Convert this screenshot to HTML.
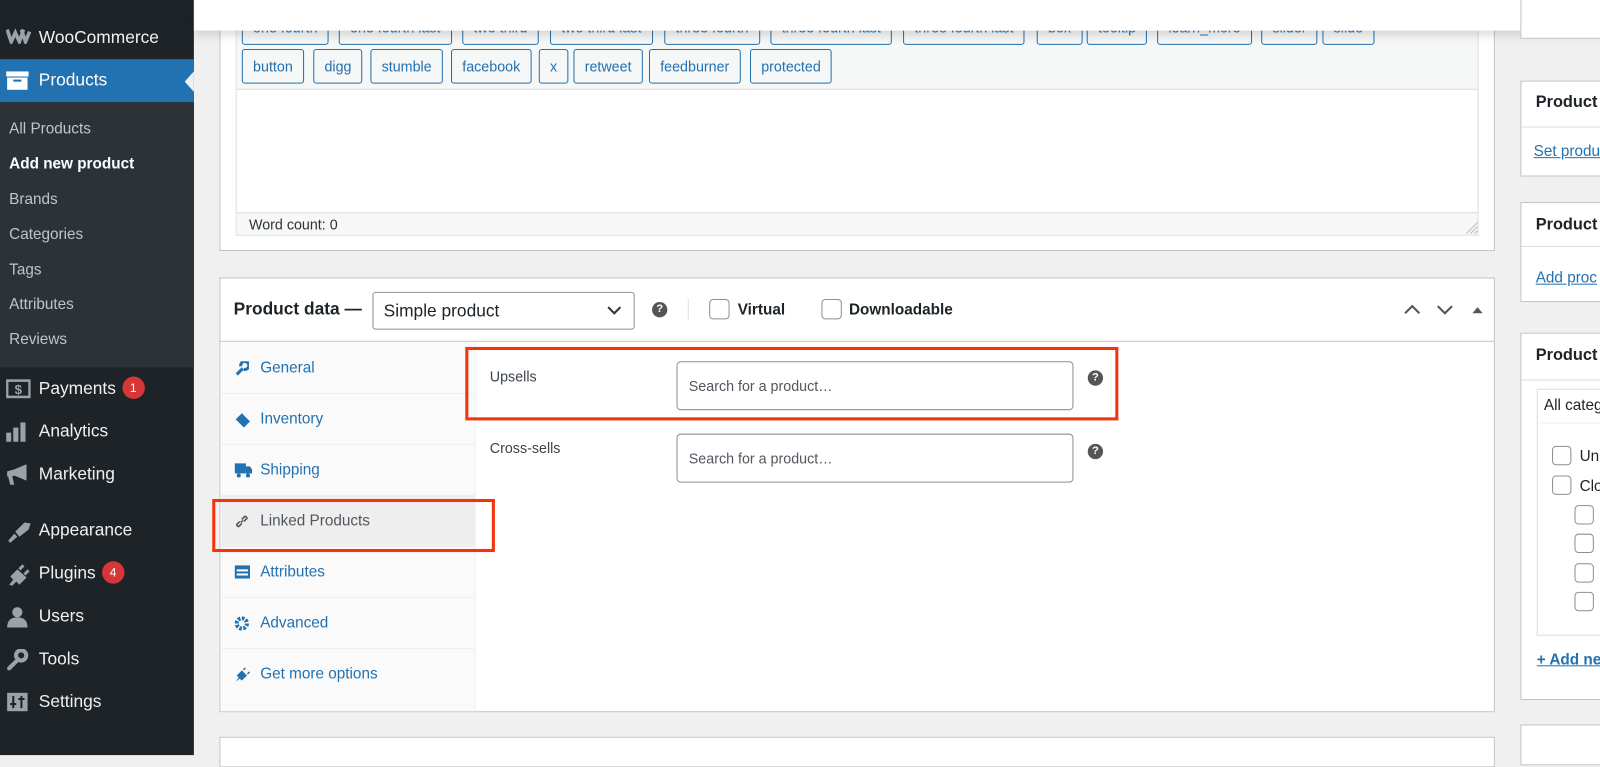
<!DOCTYPE html>
<html><head><meta charset="utf-8"><style>
*{box-sizing:border-box;margin:0;padding:0}
html,body{width:1600px;height:742px;overflow:hidden;background:#f0f0f1}
#wrap{position:absolute;left:0;top:0;width:1568px;height:740px;transform:scale(1.0204);transform-origin:0 0;font-family:"Liberation Sans",sans-serif;font-size:14px;color:#1d2327;white-space:nowrap}
.abs{position:absolute}
#side{left:0;top:0;width:190px;height:740px;background:#1d2327}
.mi{position:absolute;left:0;width:190px;height:42px;color:#f0f0f1;font-size:17px;line-height:42px;padding-left:38px}
.mi svg{position:absolute;left:6px;top:11px}
.sub{position:absolute;left:9px;color:#c3c4c7;font-size:15px}
.badge{display:inline-block;width:22px;height:22px;border-radius:11px;background:#d63638;color:#fff;font-size:12px;line-height:22px;text-align:center;margin-left:6px;vertical-align:2px}
.box{position:absolute;background:#fff;border:1px solid #c3c4c7}
.tb{position:absolute;height:34px;border:1px solid #2271b1;border-radius:3px;color:#2271b1;font-size:14px;line-height:32px;padding:0 10px;background:#f6f7f7}
.tab{position:absolute;left:1px;width:249px;height:50px;border-bottom:1px solid #eee;color:#2271b1;font-size:15px;line-height:50px;padding-left:38px}
.tab svg{position:absolute;left:13px;top:18px}
.inp{position:absolute;left:663px;width:389px;height:48px;border:1px solid #8c8f94;border-radius:4px;color:#50575e;font-size:14px;line-height:46px;padding-left:11px;background:#fff}
.q{position:absolute;width:15px;height:15px;border-radius:50%;background:#555;color:#fff;font-size:11px;font-weight:bold;text-align:center;line-height:15px}
.cb{position:absolute;width:19px;height:19px;border:1px solid #8c8f94;border-radius:4px;background:#fff}
.rh{position:absolute;left:1505px;font-weight:bold;font-size:16px}
.lnk{position:absolute;color:#2271b1;text-decoration:underline;font-size:15px}
</style></head><body><div id="wrap">

<div id="side" class="abs">
 <div class="mi" style="top:16px;height:42px;">
  <svg width="26" height="16" viewBox="0 0 26 16"><path d="M1 2 L5 14 L9 5 L13 14 L17 2 M15 2 L19 14 L23 4" stroke="#9ca2a7" stroke-width="3.5" fill="none"/></svg>WooCommerce</div>
 <div style="position:absolute;left:0;top:59px;width:190px;height:301px;background:#2c3338"></div>
 <div class="mi" style="top:58px;background:#2271b1;color:#fff;">
  <svg width="24" height="20" viewBox="0 0 24 20"><rect x="0" y="1" width="22" height="5" fill="#fff"/><rect x="1" y="7" width="20" height="12" fill="#fff"/><rect x="7" y="9" width="8" height="2" fill="#2271b1"/></svg>Products</div>
 <div style="position:absolute;left:181px;top:70px;width:0;height:0;border-top:10px solid transparent;border-bottom:10px solid transparent;border-right:9px solid #f0f0f1"></div>
 <div class="sub" style="top:118px">All Products</div>
 <div class="sub" style="top:152px;color:#fff;font-weight:bold">Add new product</div>
 <div class="sub" style="top:187px">Brands</div>
 <div class="sub" style="top:221px">Categories</div>
 <div class="sub" style="top:256px">Tags</div>
 <div class="sub" style="top:290px">Attributes</div>
 <div class="sub" style="top:324px">Reviews</div>
 <div class="mi" style="top:360px"><svg width="24" height="20"><rect x="1" y="2" width="22" height="16" fill="none" stroke="#9ca2a7" stroke-width="2.5"/><text x="12" y="15" font-size="13" font-weight="bold" fill="#9ca2a7" text-anchor="middle" font-family="Liberation Sans">$</text></svg>Payments<span class="badge">1</span></div>
 <div class="mi" style="top:402px"><svg width="22" height="20"><rect x="0" y="11" width="5" height="9" fill="#9ca2a7"/><rect x="7" y="6" width="5" height="14" fill="#9ca2a7"/><rect x="14" y="1" width="5" height="19" fill="#9ca2a7"/></svg>Analytics</div>
 <div class="mi" style="top:444px"><svg width="24" height="22"><path d="M1 7 L8 5 L20 0 L20 16 L8 11 L6 12 L8 20 L4 20 L2 12 L1 12 Z" fill="#9ca2a7"/></svg>Marketing</div>
 <div class="mi" style="top:499px"><svg width="24" height="22"><path d="M2 20 L8 13 L11 16 L4 22 Z M9 11 L18 2 L24 3 L22 9 L13 16 Z" fill="#9ca2a7"/></svg>Appearance</div>
 <div class="mi" style="top:541px"><svg width="24" height="22"><path d="M3 21 L7 16 L4 13 L11 6 L20 14 L13 21 L10 18 L6 22 Z M12 5 L16 1 L18 3 L14 7 Z M17 10 L21 6 L23 8 L19 12 Z" fill="#9ca2a7"/></svg>Plugins<span class="badge">4</span></div>
 <div class="mi" style="top:583px"><svg width="22" height="22"><circle cx="11" cy="6" r="5" fill="#9ca2a7"/><path d="M1 21 Q1 11 11 11 Q21 11 21 21 Z" fill="#9ca2a7"/></svg>Users</div>
 <div class="mi" style="top:625px"><svg width="22" height="22"><path d="M3 19 L12 10 M13 11 A5 5 0 1 0 10 8" stroke="#9ca2a7" stroke-width="4" fill="none" stroke-linecap="round"/></svg>Tools</div>
 <div class="mi" style="top:667px"><svg width="22" height="20"><rect x="1" y="1" width="20" height="18" fill="#9ca2a7"/><path d="M7 4 V16 M15 4 V16 M4 12 H10 M12 7 H18" stroke="#1d2327" stroke-width="2"/></svg>Settings</div>
</div>

<div class="box" style="left:215px;top:-2px;width:1250px;height:248px"></div>
<div class="abs" style="left:231px;top:0;width:1218px;height:231px;border:1px solid #dcdcde;background:#fff"></div>
<div class="abs" style="left:232px;top:0;width:1216px;height:88px;background:#f6f7f7;border-bottom:1px solid #dcdcde"></div>
<div class="tb" style="left:237px;top:10px">one fourth</div>
<div class="tb" style="left:332px;top:10px">one fourth last</div>
<div class="tb" style="left:453px;top:10px">two third</div>
<div class="tb" style="left:539px;top:10px">two third last</div>
<div class="tb" style="left:651px;top:10px">three fourth</div>
<div class="tb" style="left:755px;top:10px">three fourth last</div>
<div class="tb" style="left:885px;top:10px">three fourth last</div>
<div class="tb" style="left:1016px;top:10px">box</div>
<div class="tb" style="left:1065px;top:10px">tooltip</div>
<div class="tb" style="left:1134px;top:10px">learn_more</div>
<div class="tb" style="left:1236px;top:10px">slider</div>
<div class="tb" style="left:1296px;top:10px">slide</div>
<div class="tb" style="left:237px;top:48px">button</div>
<div class="tb" style="left:307px;top:48px">digg</div>
<div class="tb" style="left:363px;top:48px">stumble</div>
<div class="tb" style="left:442px;top:48px">facebook</div>
<div class="tb" style="left:528px;top:48px">x</div>
<div class="tb" style="left:562px;top:48px">retweet</div>
<div class="tb" style="left:636px;top:48px">feedburner</div>
<div class="tb" style="left:735px;top:48px">protected</div>
<div class="abs" style="left:232px;top:208px;width:1216px;height:22px;background:#f6f7f7;border-top:1px solid #dcdcde;font-size:14px;line-height:22px;padding-left:12px;color:#2c3338">Word count: 0</div>
<svg class="abs" style="left:1436px;top:217px" width="12" height="12"><path d="M12 1 L1 12 M12 5 L5 12 M12 9 L9 12" stroke="#bbb"/></svg>

<div class="abs" style="left:190px;top:0;width:1400px;height:30px;background:#fff;box-shadow:0 4px 10px rgba(0,0,0,.15)"></div>

<div class="box" style="left:215px;top:272px;width:1250px;height:426px">
 <div style="position:absolute;left:0;top:0;width:1248px;height:62px;border-bottom:1px solid #c3c4c7"></div>
 <div style="position:absolute;left:13px;top:20px;font-weight:bold;font-size:17px">Product data —</div>
 <div style="position:absolute;left:149px;top:13px;width:257px;height:37px;border:1px solid #8c8f94;border-radius:3px;font-size:17px;line-height:35px;padding-left:10px">Simple product
  <svg style="position:absolute;right:12px;top:13px" width="14" height="9"><path d="M1 1 L7 7 L13 1" stroke="#333" stroke-width="2" fill="none"/></svg></div>
 <div class="q" style="left:423px;top:23px">?</div>
 <div style="position:absolute;left:458px;top:20px;width:1px;height:20px;background:#dcdcde"></div>
 <div class="cb" style="left:479px;top:20px;width:20px;height:20px"></div>
 <div style="position:absolute;left:507px;top:22px;font-weight:bold;font-size:15px">Virtual</div>
 <div class="cb" style="left:589px;top:20px;width:20px;height:20px"></div>
 <div style="position:absolute;left:616px;top:22px;font-weight:bold;font-size:15px">Downloadable</div>
 <svg style="position:absolute;left:1160px;top:24px" width="90" height="12"><path d="M1 10 L8 3 L15 10" stroke="#50575e" stroke-width="2" fill="none"/><path d="M33 3 L40 10 L47 3" stroke="#50575e" stroke-width="2" fill="none"/><path d="M67 10 L72 4 L77 10 Z" fill="#50575e"/></svg>
 <div style="position:absolute;left:0;top:63px;width:250px;height:361px;background:#fafafa;border-right:1px solid #eee"></div>
 <div class="tab" style="top:63px"><svg width="14" height="14"><path d="M2 13 L8 7 M9 8 A4 4 0 1 0 6 5" stroke="#2271b1" stroke-width="3" fill="none"/></svg>General</div>
 <div class="tab" style="top:113px"><svg width="16" height="16"><path d="M1 7 L7 1 L15 9 L9 15 Z" fill="#2271b1"/></svg>Inventory</div>
 <div class="tab" style="top:163px"><svg width="17" height="14"><rect x="0" y="0" width="11" height="10" fill="#2271b1"/><path d="M11 3 H15 L17 6 V10 H11 Z" fill="#2271b1"/><circle cx="4" cy="12" r="2" fill="#2271b1"/><circle cx="13" cy="12" r="2" fill="#2271b1"/></svg>Shipping</div>
 <div class="tab" style="top:213px;background:#eee;color:#50575e"><svg width="14" height="14"><path d="M6 8 L8 6 M5 7 L2 10 A2 2 0 0 0 4 12 L7 9 M9 7 L12 4 A2 2 0 0 0 10 2 L7 5" stroke="#50575e" stroke-width="1.6" fill="none"/></svg>Linked Products</div>
 <div class="tab" style="top:263px"><svg width="15" height="13"><rect x="0" y="0" width="15" height="13" fill="#2271b1"/><rect x="2" y="4" width="11" height="2" fill="#fff"/><rect x="2" y="8" width="11" height="2" fill="#fff"/></svg>Attributes</div>
 <div class="tab" style="top:313px"><svg width="14" height="14"><circle cx="7" cy="7" r="5" fill="none" stroke="#2271b1" stroke-width="4" stroke-dasharray="2.5 1.4"/></svg>Advanced</div>
 <div class="tab" style="top:363px;border-bottom:none"><svg width="15" height="15"><path d="M1 14 L4 10 L2 8 L7 3 L12 8 L7 13 L5 11 Z M8 2 L10 0 L11 1 L9 3 Z M12 6 L14 4 L15 5 L13 7 Z" fill="#2271b1"/></svg>Get more options</div>
</div>
<div class="abs" style="left:480px;top:361px;color:#3c434a;font-size:14px">Upsells</div>
<div class="abs" style="left:480px;top:431px;color:#3c434a;font-size:14px">Cross-sells</div>
<div class="inp" style="top:354px">Search for a product…</div>
<div class="inp" style="top:425px">Search for a product…</div>
<div class="q" style="left:1066px;top:363px">?</div>
<div class="q" style="left:1066px;top:435px">?</div>
<div class="abs" style="left:456px;top:340px;width:640px;height:72px;border:3px solid #f2330d"></div>
<div class="abs" style="left:208px;top:489px;width:277px;height:52px;border:3px solid #f2330d"></div>
<div class="box" style="left:215px;top:722px;width:1250px;height:30px"></div>

<div class="box" style="left:1490px;top:-2px;width:120px;height:40px"></div>
<div class="box" style="left:1490px;top:79px;width:120px;height:94px"><div style="position:absolute;left:0;top:0;width:120px;height:45px;border-bottom:1px solid #dcdcde"></div></div>
<div class="rh" style="top:92px">Product</div>
<div class="lnk" style="left:1503px;top:140px">Set produ</div>
<div class="box" style="left:1490px;top:198px;width:120px;height:98px"><div style="position:absolute;left:0;top:0;width:120px;height:43px;border-bottom:1px solid #dcdcde"></div></div>
<div class="rh" style="top:212px">Product</div>
<div class="lnk" style="left:1505px;top:264px">Add proc</div>
<div class="box" style="left:1490px;top:326px;width:120px;height:360px"><div style="position:absolute;left:0;top:0;width:120px;height:46px;border-bottom:1px solid #dcdcde"></div></div>
<div class="rh" style="top:340px">Product</div>
<div class="abs" style="left:1506px;top:381px;width:100px;height:242px;border:1px solid #dcdcde;background:#fff"><div style="position:absolute;left:0;top:0;width:100px;height:33px;border-bottom:1px solid #eee"></div></div>
<div class="abs" style="left:1513px;top:389px;font-size:15px">All categ</div>
<div class="cb" style="left:1521px;top:437px"></div><div class="abs" style="left:1548px;top:439px;font-size:15px">Un</div>
<div class="cb" style="left:1521px;top:466px"></div><div class="abs" style="left:1548px;top:468px;font-size:15px">Clo</div>
<div class="cb" style="left:1543px;top:495px"></div>
<div class="cb" style="left:1543px;top:523px"></div>
<div class="cb" style="left:1543px;top:552px"></div>
<div class="cb" style="left:1543px;top:580px"></div>
<div class="lnk" style="left:1506px;top:638px;font-weight:bold">+ Add ne</div>
<div class="box" style="left:1490px;top:710px;width:120px;height:40px"></div>
</div></body></html>
